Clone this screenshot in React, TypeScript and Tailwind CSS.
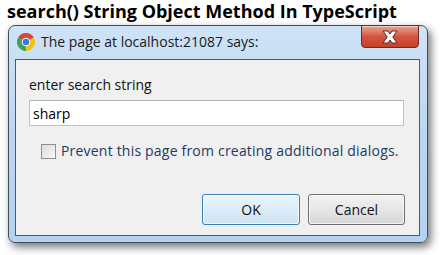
import { useState } from 'react'

function ChromeIcon() {
  return (
    <svg width="18" height="18" viewBox="0 0 18 18">
      <path d="M9 9 L1.2 4.5 A9 9 0 0 1 16.8 4.5 Z" fill="#db4437" />
      <path d="M9 9 L16.8 4.5 A9 9 0 0 1 9 18 Z" fill="#f4c20d" />
      <path d="M9 9 L9 18 A9 9 0 0 1 1.2 4.5 Z" fill="#3aa757" />
      <circle cx="9" cy="9" r="4.3" fill="#fff" />
      <circle cx="9" cy="9" r="3.3" fill="#3b78e7" />
    </svg>
  )
}

function CloseGlyph() {
  return (
    <svg width="20" height="16" viewBox="0 0 20 16">
      <path
        d="M3 2 H8 L10 5 L12 2 H17 L12.8 8 L17 14 H12 L10 11 L8 14 H3 L7.2 8 Z"
        fill="#fff"
        stroke="#5a2a24"
        strokeWidth="1"
        strokeLinejoin="round"
      />
    </svg>
  )
}

export default function App() {
  const [value, setValue] = useState('sharp')
  const [checked, setChecked] = useState(false)

  return (
    <div className="w-[440px] h-[255px] bg-white overflow-hidden font-['Open_Sans',sans-serif]">
      <h1 className="pl-[7px] text-[18px] leading-[23px] font-bold text-black whitespace-nowrap">
        search() String Object Method In TypeScript
      </h1>

      {/* dialog frame */}
      <div className="ml-[8px] mt-[2px] w-[420px] h-[218px] rounded-[7px] border border-[#3f4d5c] bg-gradient-to-b from-[#cfe3f7] via-[#bcd6f1] to-[#b5d2f0] shadow-[3px_4px_8px_rgba(0,0,0,0.55)] flex flex-col">
        {/* title bar */}
        <div className="h-[33px] flex items-start pl-[8px] pr-[8px]">
          <div className="mt-[7px]">
            <ChromeIcon />
          </div>
          <span className="ml-[6px] mt-[6px] text-[14px] leading-[20px] text-[#1a1a1a]">
            The page at localhost:21087 says:
          </span>
          <button className="ml-auto -mt-[1px] w-[58px] h-[23px] rounded-b-[4px] border border-[#6b2b22] bg-gradient-to-b from-[#e8a593] via-[#d4553f] to-[#c7402b] flex items-center justify-center shadow-[inset_0_1px_0_rgba(255,255,255,0.5)]">
            <CloseGlyph />
          </button>
        </div>

        {/* client area */}
        <div className="ml-[6px] mr-[7px] h-[177px] border border-[#4a5a6b] bg-[#f0f0f0] flex flex-col">
          <div className="pl-[13px] pt-[15px] text-[14px] leading-[20px] text-[#111]">enter search string</div>
          <input
            autoFocus
            value={value}
            onChange={(e) => setValue(e.target.value)}
            className="ml-[13px] mt-[5px] w-[375px] h-[26px] bg-white border border-[#b9c4d1] border-t-[#abb3bd] px-[3px] text-[14px] text-black outline-none caret-black font-['Open_Sans',sans-serif]"
          />
          <label className="ml-[25px] mt-[15px] flex items-center gap-[5px] cursor-pointer">
            <span
              onClick={() => setChecked(!checked)}
              className="w-[15px] h-[15px] border border-[#8e8f8f] bg-gradient-to-br from-[#dcdcdc] to-[#f8f8f8] flex items-center justify-center text-[11px] leading-none"
            >
              {checked ? '✓' : ''}
            </span>
            <span className="text-[14px] leading-[20px] tracking-[0.2px] text-[#1e3a5f]">
              Prevent this page from creating additional dialogs.
            </span>
          </label>
          <div className="mt-auto mb-[10px] mr-[14px] flex justify-end gap-[8px]">
            <button className="w-[98px] h-[31px] rounded-[3px] border border-[#3c7fb1] bg-gradient-to-b from-[#eaf6fd] via-[#dcecf7] to-[#cfe3f1] shadow-[inset_0_0_0_1px_rgba(255,255,255,0.7)] text-[14px] text-[#111]">
              OK
            </button>
            <button className="w-[97px] h-[31px] rounded-[3px] border border-[#707070] bg-gradient-to-b from-[#f2f2f2] via-[#e6e6e6] to-[#d6d6d6] shadow-[inset_0_0_0_1px_rgba(255,255,255,0.7)] text-[14px] text-[#111]">
              Cancel
            </button>
          </div>
        </div>
      </div>
    </div>
  )
}
